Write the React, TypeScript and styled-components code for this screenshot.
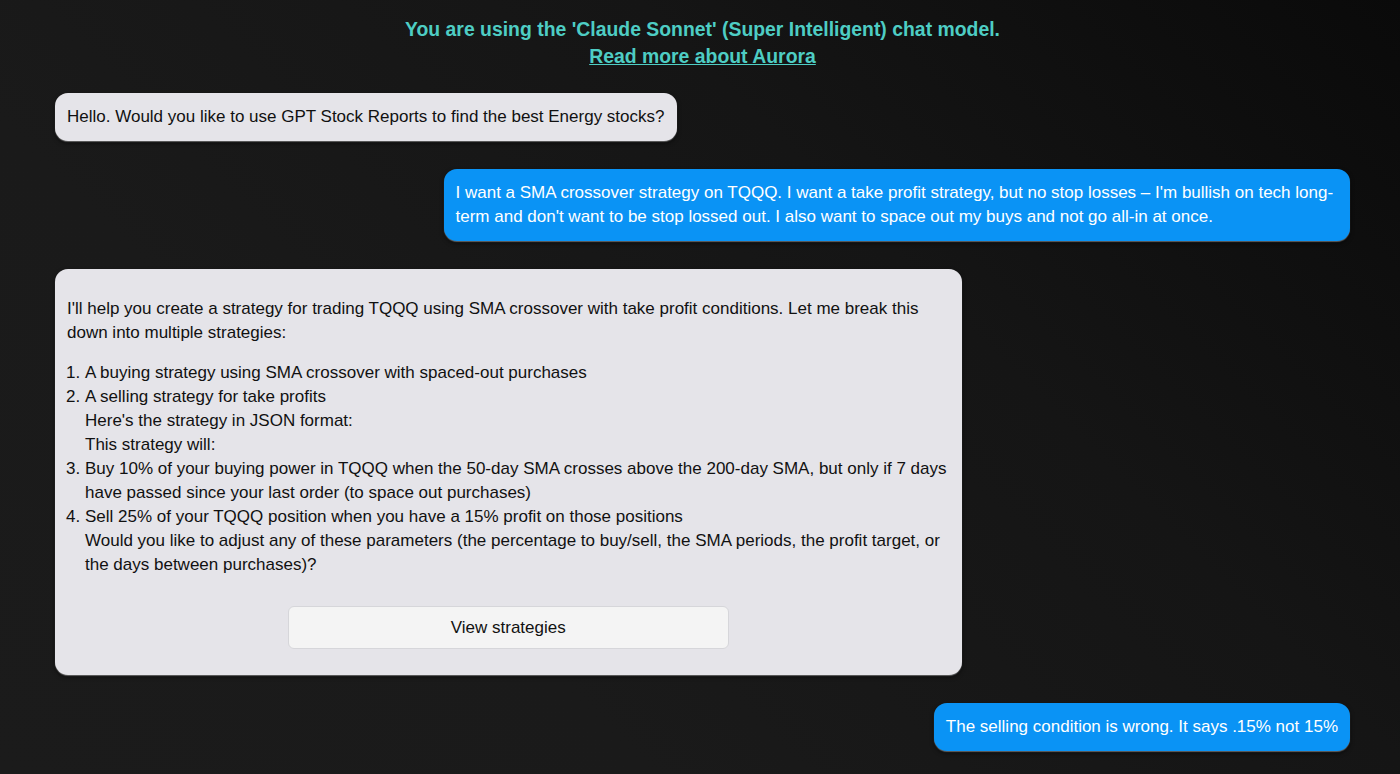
import React from "react";
import styled, { createGlobalStyle } from "styled-components";

const GlobalStyle = createGlobalStyle`
  html, body {
    margin: 0;
    padding: 0;
    height: 100%;
  }
  body {
    font-family: "Liberation Sans", Arial, Helvetica, sans-serif;
    background: linear-gradient(225deg, #0a0a0a 0%, #151515 35%, #1a1a1a 70%, #1b1b1b 100%);
    background-attachment: fixed;
    min-height: 774px;
  }
`;

type Side = "bot" | "user";

const Page = styled.div`
  display: flex;
  flex-direction: column;
  gap: 28px;
  padding: 18px 50px 22px 55px;
  box-sizing: border-box;
  min-height: 774px;
`;

const Header = styled.div`
  display: flex;
  flex-direction: column;
  align-items: center;
  gap: 5px;
  color: #4ecdc4;
  font-size: 19.4px;
  font-weight: bold;
  line-height: 22px;
  margin-bottom: -2px;
`;

const ReadMore = styled.a`
  color: #4ecdc4;
  text-decoration: underline;
  cursor: pointer;
`;

const Row = styled.div<{ $side: Side }>`
  display: flex;
  justify-content: ${(p) => (p.$side === "user" ? "flex-end" : "flex-start")};
`;

const Bubble = styled.div<{ $side: Side }>`
  max-width: 70%;
  box-sizing: border-box;
  padding: 12px;
  border-radius: 13px;
  font-size: 17px;
  line-height: 24px;
  background: ${(p) => (p.$side === "user" ? "#0a93f5" : "#e5e4e9")};
  color: ${(p) => (p.$side === "user" ? "#ffffff" : "#111111")};
  box-shadow: 0 1px 1px rgba(255, 255, 255, 0.35), 0 2px 4px rgba(0, 0, 0, 0.6);

  p {
    margin: 16px 0;
  }
`;

const List = styled.ol`
  margin: 16px 0;
  padding-left: 18px;
`;

const ButtonWrap = styled.div`
  display: flex;
  justify-content: center;
  padding: 13px 0 14px;
`;

const ViewButton = styled.button`
  width: 50%;
  height: 43px;
  background: #f4f4f4;
  border: 1px solid #d6d6da;
  border-radius: 6px;
  font-family: "Liberation Sans", Arial, sans-serif;
  font-size: 17px;
  color: #111;
  cursor: pointer;
`;

export default function App() {
  return (
    <>
      <GlobalStyle />
      <Page>
        <Header>
          <span>You are using the 'Claude Sonnet' (Super Intelligent) chat model.</span>
          <ReadMore>Read more about Aurora</ReadMore>
        </Header>

        <Row $side="bot">
          <Bubble $side="bot">
            Hello. Would you like to use GPT Stock Reports to find the best Energy stocks?
          </Bubble>
        </Row>

        <Row $side="user">
          <Bubble $side="user">
            I want a SMA crossover strategy on TQQQ. I want a take profit strategy, but no stop
            losses – I'm bullish on tech long-term and don't want to be stop lossed out. I also
            want to space out my buys and not go all-in at once.
          </Bubble>
        </Row>

        <Row $side="bot">
          <Bubble $side="bot">
            <p>
              I'll help you create a strategy for trading TQQQ using SMA crossover with take profit
              conditions. Let me break this down into multiple strategies:
            </p>
            <List>
              <li>A buying strategy using SMA crossover with spaced-out purchases</li>
              <li>
                A selling strategy for take profits
                <br />
                Here's the strategy in JSON format:
                <br />
                This strategy will:
              </li>
              <li>
                Buy 10% of your buying power in TQQQ when the 50-day SMA crosses above the 200-day
                SMA, but only if 7 days have passed since your last order (to space out purchases)
              </li>
              <li>
                Sell 25% of your TQQQ position when you have a 15% profit on those positions
                <br />
                Would you like to adjust any of these parameters (the percentage to buy/sell, the
                SMA periods, the profit target, or the days between purchases)?
              </li>
            </List>
            <ButtonWrap>
              <ViewButton>View strategies</ViewButton>
            </ButtonWrap>
          </Bubble>
        </Row>

        <Row $side="user">
          <Bubble $side="user">The selling condition is wrong. It says .15% not 15%</Bubble>
        </Row>
      </Page>
    </>
  );
}
